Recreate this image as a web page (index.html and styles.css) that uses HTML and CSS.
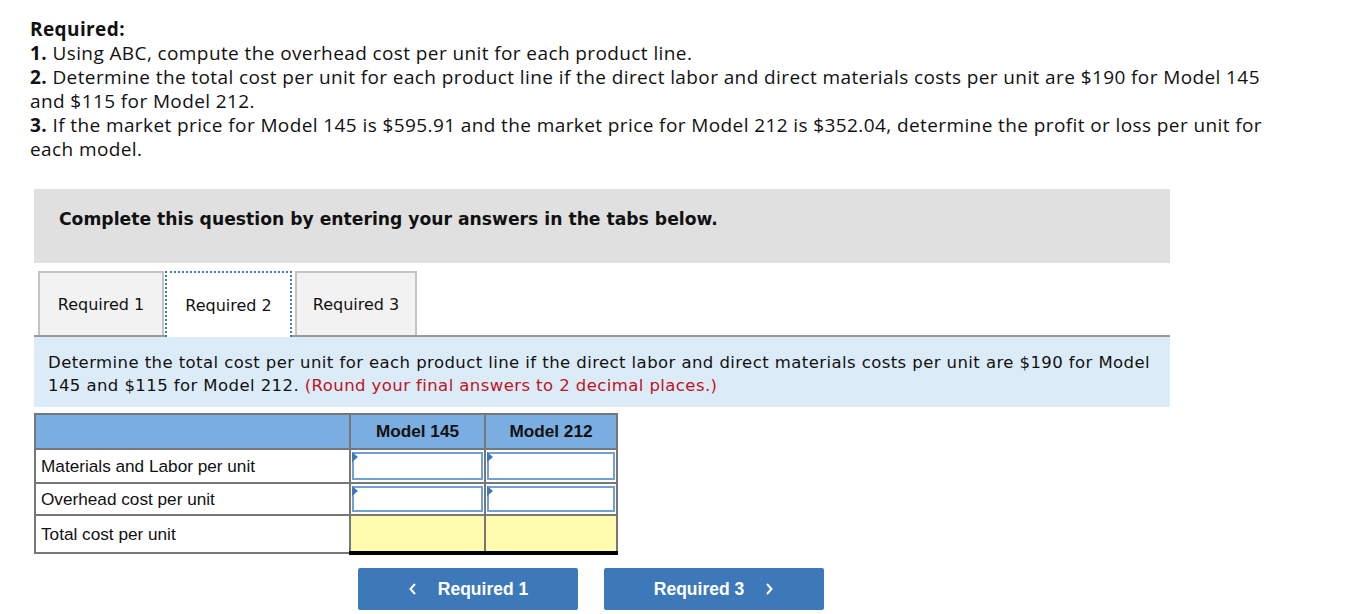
FILE: index.html
```html
<!DOCTYPE html>
<html>
<head>
<meta charset="utf-8">
<link rel="stylesheet" href="styles.css">
</head>
<body>
<div class="page">
  <div class="req">
    <div class="req-title">Required:</div>
    <div><b>1.</b> Using ABC, compute the overhead cost per unit for each product line.</div>
    <div><b>2.</b> Determine the total cost per unit for each product line if the direct labor and direct materials costs per unit are $190 for Model 145 and $115 for Model 212.</div>
    <div><b>3.</b> If the market price for Model 145 is $595.91 and the market price for Model 212 is $352.04, determine the profit or loss per unit for each model.</div>
  </div>

  <div class="complete">Complete this question by entering your answers in the tabs below.</div>

  <div class="tabs">
    <div class="tab t1">Required 1</div>
    <div class="tab t2 active">Required 2</div>
    <div class="tab t3">Required 3</div>
  </div>

  <div class="info">Determine the total cost per unit for each product line if the direct labor and direct materials costs per unit are $190 for Model 145 and $115 for Model 212. <span class="red">(Round your final answers to 2 decimal places.)</span></div>

  <table class="grid">
    <tr class="head">
      <th class="label"></th>
      <th class="c2">Model 145</th>
      <th class="c3">Model 212</th>
    </tr>
    <tr class="row-in r1">
      <td class="label">Materials and Labor per unit</td>
      <td class="in"><div class="box"><span class="flag"></span></div></td>
      <td class="in"><div class="box"><span class="flag"></span></div></td>
    </tr>
    <tr class="row-in r2">
      <td class="label">Overhead cost per unit</td>
      <td class="in"><div class="box"><span class="flag"></span></div></td>
      <td class="in"><div class="box"><span class="flag"></span></div></td>
    </tr>
    <tr class="row-total">
      <td class="label">Total cost per unit</td>
      <td class="total"></td>
      <td class="total"></td>
    </tr>
  </table>

  <div class="nav">
    <div class="btn"><svg class="chev" width="10" height="14" viewBox="0 0 10 14"><path d="M7 2 L2.5 7 L7 12" fill="none" stroke="#fff" stroke-width="2"/></svg>Required 1</div>
    <div class="btn">Required 3<svg class="chev right" width="10" height="14" viewBox="0 0 10 14"><path d="M3 2 L7.5 7 L3 12" fill="none" stroke="#fff" stroke-width="2"/></svg></div>
  </div>
</div>
</body>
</html>
```

FILE: styles.css
```css
html, body {
  margin: 0;
  padding: 0;
  background: #fff;
}
.page {
  padding: 17px 0 0 30px;
}
.req {
  width: 1240px;
  font-family: "Open Sans", "Liberation Sans", sans-serif;
  font-size: 19px;
  letter-spacing: 0.4px;
  line-height: 24px;
  color: #111;
}
.req b, .req-title {
  font-weight: 700;
}
.complete {
  margin: 28px 0 0 4px;
  width: 1136px;
  height: 74px;
  box-sizing: border-box;
  background: #e0e0e0;
  padding: 20px 0 0 25px;
  font-family: "DejaVu Sans", Verdana, sans-serif;
  font-weight: 700;
  font-size: 17.2px;
  color: #111;
}
.tabs {
  margin: 8px 0 0 4px;
  width: 1136px;
  display: flex;
  padding-left: 4px;
  box-sizing: border-box;
  border-bottom: 2px solid #999;
}
.tab {
  height: 64px;
  box-sizing: border-box;
  background: #f2f2f2;
  border: 2px solid #c4c4c4;
  border-bottom: none;
  display: flex;
  align-items: center;
  justify-content: center;
  font-family: "DejaVu Sans", Verdana, sans-serif;
  font-size: 16px;
  color: #111;
}
.t1 {
  width: 126px;
}
.t2 {
  width: 127px;
  margin-left: 1px;
}
.t3 {
  width: 122px;
  margin-left: 3px;
}
.tab.active {
  background: #fff;
  border: 2px dotted #3d78b8;
  border-bottom: none;
  margin-bottom: -2px;
  height: 66px;
}
.info {
  margin-left: 4px;
  width: 1136px;
  box-sizing: border-box;
  background: #dcebf8;
  padding: 14px 10px 10px 14px;
  font-family: "DejaVu Sans", Verdana, sans-serif;
  font-size: 16.5px;
  letter-spacing: 0.42px;
  line-height: 23px;
  color: #111;
}
.red {
  color: #c0121c;
}
.grid {
  margin: 6px 0 0 4px;
  border-collapse: collapse;
  font-family: "Liberation Sans", Arial, sans-serif;
  font-size: 17.2px;
  color: #111;
}
.grid td, .grid th {
  border: 2px solid #777;
  padding: 0;
}
.grid th {
  background: #7aade0;
  height: 33px;
  font-weight: 700;
  text-align: center;
}
.grid th.label {
  width: 313px;
}
.grid th.c2 {
  width: 133px;
}
.grid th.c3 {
  width: 130px;
}
.grid td.label {
  padding-left: 5px;
  text-align: left;
}
.r1 td {
  height: 30px;
}
.r2 td {
  height: 28px;
}
.row-total td {
  height: 35px;
}
.grid td.in {
  padding: 1px;
}
.box {
  position: relative;
  box-sizing: border-box;
  border: 2px solid #6fa1d8;
  background: #fff;
}
.r1 .box {
  height: 28px;
}
.r2 .box {
  height: 26px;
}
.flag {
  position: absolute;
  left: -2px;
  top: -2px;
  width: 0;
  height: 0;
  border-top: 5px solid transparent;
  border-bottom: 5px solid transparent;
  border-left: 6px solid #3d78b8;
}
.grid td.total {
  background: #fffcb0;
  border-bottom: 4px solid #000;
}
.nav {
  display: flex;
  gap: 26px;
  margin: 13px 0 0 328px;
}
.btn {
  width: 220px;
  height: 42px;
  background: #3d78b8;
  border-radius: 2px;
  color: #fff;
  font-family: "Liberation Sans", Arial, sans-serif;
  font-weight: 700;
  font-size: 17.5px;
  display: flex;
  align-items: center;
  justify-content: center;
}
.chev {
  margin-right: 20px;
}
.chev.right {
  margin-right: 0;
  margin-left: 20px;
}
```
